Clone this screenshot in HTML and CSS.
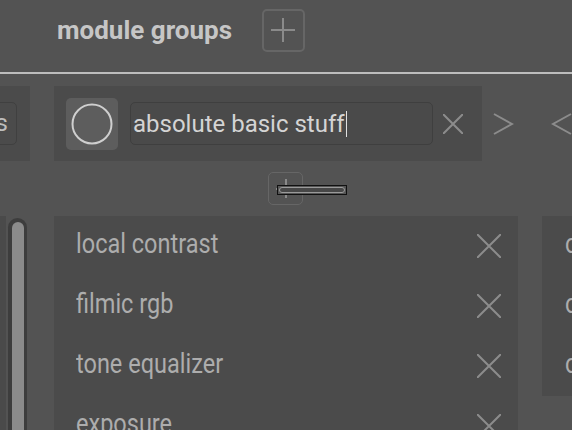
FILE: index.html
```html
<!DOCTYPE html>
<html>
<head>
<meta charset="utf-8">
<link rel="stylesheet" href="styles.css">
</head>
<body>
<div class="page">
  <header class="header">
    <h1 class="title">module groups</h1>
    <div class="add-btn">
      <svg width="26" height="26" viewBox="0 0 26 26"><path d="M13 1V25M1 13H25" stroke="#8a8a8a" stroke-width="2" fill="none"/></svg>
    </div>
  </header>
  <div class="rule"></div>

  <div class="group-row">
    <div class="stub"><div class="stub-box">tools</div></div>
    <div class="group-panel">
      <div class="circle-btn">
        <svg width="42" height="42" viewBox="0 0 42 42"><circle cx="21" cy="21" r="19.5" stroke="#cfcfcf" stroke-width="2" fill="none"/></svg>
      </div>
      <div class="name-input"><span class="name-text">absolute basic stuff</span><span class="caret"></span></div>
      <svg class="x-icon" width="20" height="20" viewBox="0 0 20 20"><path d="M0 0L20 20M20 0L0 20" stroke="#8c8c8c" stroke-width="2" fill="none"/></svg>
    </div>
    <svg class="chev chev-next" width="21" height="22" viewBox="0 0 21 22"><path d="M1 1L19 11L1 21" stroke="#8c8c8c" stroke-width="2" fill="none"/></svg>
    <svg class="chev chev-prev" width="21" height="22" viewBox="0 0 21 22"><path d="M20 1L2 11L20 21" stroke="#8c8c8c" stroke-width="2" fill="none"/></svg>
  </div>

  <div class="add-zone">
    <div class="small-add">
      <svg width="24" height="20" viewBox="0 0 24 20"><path d="M12 0V19M2 10H22" stroke="#8a8a8a" stroke-width="2" fill="none"/></svg>
    </div>
    <div class="drag-slider"><div class="drag-inner"></div></div>
  </div>

  <div class="list-row">
    <div class="scroll-col">
      <div class="edge-panel"></div>
      <div class="trough"><div class="thumb"></div></div>
    </div>
    <div class="list-panel">
      <div class="item"><span class="item-name">local contrast</span><svg class="item-x" width="24" height="24" viewBox="0 0 24 24"><path d="M0 0L24 24M24 0L0 24" stroke="#8c8c8c" stroke-width="2" fill="none"/></svg></div>
      <div class="item"><span class="item-name">filmic rgb</span><svg class="item-x" width="24" height="24" viewBox="0 0 24 24"><path d="M0 0L24 24M24 0L0 24" stroke="#8c8c8c" stroke-width="2" fill="none"/></svg></div>
      <div class="item"><span class="item-name">tone equalizer</span><svg class="item-x" width="24" height="24" viewBox="0 0 24 24"><path d="M0 0L24 24M24 0L0 24" stroke="#8c8c8c" stroke-width="2" fill="none"/></svg></div>
      <div class="item"><span class="item-name">exposure</span><svg class="item-x" width="24" height="24" viewBox="0 0 24 24"><path d="M0 0L24 24M24 0L0 24" stroke="#8c8c8c" stroke-width="2" fill="none"/></svg></div>
    </div>
    <div class="side-panel">
      <div class="side-item">color balance rgb</div>
      <div class="side-item">color calibration</div>
      <div class="side-item">contrast equalizer</div>
    </div>
  </div>
</div>
</body>
</html>
```

FILE: styles.css
```css
html, body {
  margin: 0;
  padding: 0;
}
body {
  background: #535353;
  font-family: Roboto, "Liberation Sans", sans-serif;
  width: 572px;
  height: 430px;
  overflow: hidden;
}
.page {
  width: 572px;
  height: 430px;
  overflow: hidden;
}
.header {
  display: flex;
  align-items: center;
  height: 60px;
  padding-left: 57px;
  gap: 30px;
}
.title {
  margin: 0;
  font-size: 26px;
  font-weight: 700;
  color: #c6c6c6;
  line-height: 30px;
}
.add-btn {
  width: 43px;
  height: 43px;
  box-sizing: border-box;
  border: 2px solid #666666;
  border-radius: 5px;
  display: flex;
  align-items: center;
  justify-content: center;
}
.rule {
  height: 2px;
  margin-top: 12px;
  background: #bdbdbd;
}
.group-row {
  display: flex;
  align-items: center;
  margin-top: 12px;
  height: 75px;
}
.stub {
  width: 30px;
  height: 75px;
  background: #4b4b4b;
  overflow: hidden;
  display: flex;
  align-items: center;
  justify-content: flex-end;
  padding-right: 13px;
  box-sizing: border-box;
  flex-shrink: 0;
}
.stub-box {
  flex-shrink: 0;
  height: 43px;
  box-sizing: border-box;
  border: 1px solid #404040;
  border-radius: 5px;
  padding: 0 8px 0 10px;
  font-size: 24px;
  line-height: 41px;
  color: #bdbdbd;
}
.group-panel {
  margin-left: 24px;
  width: 428px;
  height: 75px;
  box-sizing: border-box;
  background: #4b4b4b;
  display: flex;
  align-items: center;
  padding: 0 12px;
  flex-shrink: 0;
}
.circle-btn {
  width: 52px;
  height: 52px;
  background: #5d5d5d;
  border-radius: 5px;
  display: flex;
  align-items: center;
  justify-content: center;
}
.name-input {
  margin-left: 12px;
  width: 303px;
  height: 43px;
  box-sizing: border-box;
  border: 1px solid #3f3f3f;
  border-radius: 5px;
  background: #4a4a4a;
  padding-left: 2px;
  display: flex;
  align-items: center;
}
.name-text {
  font-size: 24px;
  color: #d4d4d4;
  line-height: 28px;
}
.caret {
  width: 1.5px;
  height: 26px;
  background: #e0e0e0;
  margin-left: 1px;
}
.x-icon {
  margin-left: 10px;
}
.chev {
  flex-shrink: 0;
}
.chev-next {
  margin-left: 11px;
}
.chev-prev {
  margin-left: 37px;
}
.add-zone {
  position: relative;
  height: 55px;
  padding-top: 11px;
  box-sizing: border-box;
  padding-left: 268px;
}
.small-add {
  width: 35px;
  height: 33px;
  box-sizing: border-box;
  border: 1px solid #666666;
  border-radius: 5px;
  display: flex;
  align-items: center;
  justify-content: center;
}
.drag-slider {
  position: absolute;
  left: 277px;
  top: 24px;
  width: 70px;
  height: 10px;
  box-sizing: border-box;
  border: 1px solid #111111;
  background: #555555;
  padding: 1px;
}
.drag-inner {
  height: 100%;
  box-sizing: border-box;
  border: 1px solid #9a9a9a;
  border-radius: 4px;
  background: #474747;
}
.list-row {
  display: flex;
  align-items: flex-start;
  height: 214px;
}
.scroll-col {
  width: 54px;
  height: 214px;
  display: flex;
  flex-shrink: 0;
}
.edge-panel {
  width: 6px;
  height: 214px;
  background: #4a4a4a;
}
.trough {
  margin-left: 2px;
  margin-top: 2px;
  width: 19px;
  height: 212px;
  box-sizing: border-box;
  background: #3d3d3d;
  border-radius: 10px 10px 0 0;
  padding: 4px 3px 0 4px;
}
.thumb {
  height: 100%;
  background: #8b8b8b;
  border-radius: 6px 6px 0 0;
}
.list-panel {
  width: 464px;
  height: 214px;
  background: #4b4b4b;
  flex-shrink: 0;
}
.item {
  display: flex;
  align-items: center;
  justify-content: space-between;
  height: 60px;
  padding: 0 17px 0 22px;
}
.item-name {
  display: inline-block;
  font-size: 28px;
  line-height: 32px;
  margin-bottom: 4px;
  color: #adadad;
  transform: scaleX(0.84);
  transform-origin: left center;
  white-space: nowrap;
}
.side-panel {
  margin-left: 24px;
  width: 120px;
  height: 180px;
  background: #4b4b4b;
  flex-shrink: 0;
  padding-left: 23px;
  box-sizing: border-box;
  overflow: hidden;
}
.side-item {
  height: 60px;
  line-height: 56px;
  font-size: 28px;
  color: #adadad;
  white-space: nowrap;
  transform: scaleX(0.84);
  transform-origin: left center;
}
```
